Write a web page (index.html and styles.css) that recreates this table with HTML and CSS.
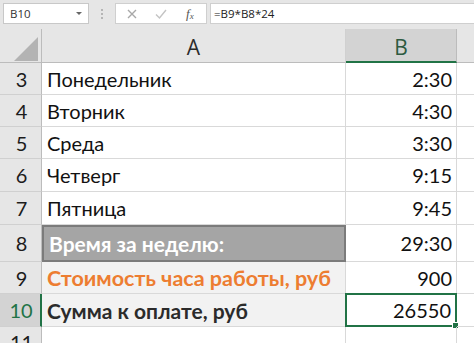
FILE: index.html
```html
<!DOCTYPE html>
<html lang="ru">
<head>
<meta charset="utf-8">
<link rel="stylesheet" href="styles.css">
</head>
<body>
<div class="toolbar">
  <div class="namebox"><span class="name">B10</span><span class="caret"></span></div>
  <div class="grip"><i></i><i></i><i></i></div>
  <div class="btns">
    <svg class="ic" width="14" height="14" viewBox="0 0 14 14"><path d="M3 3 L11 11 M11 3 L3 11" stroke="#a8a8a8" stroke-width="1.4" fill="none"/></svg>
    <svg class="ic" width="14" height="14" viewBox="0 0 14 14"><path d="M2 7.5 L5.5 11 L12 3" stroke="#c4c4c4" stroke-width="1.4" fill="none"/></svg>
    <span class="fx">f<sub>x</sub></span>
  </div>
  <div class="formula">=B9*B8*24</div>
</div>
<div class="sheet">
  <div class="corner"><svg width="41" height="34" viewBox="0 0 41 34"><polygon points="38,8 38,32 14,32" fill="#b3b3b3"/></svg></div>
  <div class="colh">A</div>
  <div class="colh sel">B</div>
  <div class="colh last"></div>

  <div class="rowh r3">3</div><div class="c a">Понедельник</div><div class="c b">2:30</div><div class="c e"></div>
  <div class="rowh">4</div><div class="c a">Вторник</div><div class="c b">4:30</div><div class="c e"></div>
  <div class="rowh">5</div><div class="c a">Среда</div><div class="c b">3:30</div><div class="c e"></div>
  <div class="rowh">6</div><div class="c a">Четверг</div><div class="c b">9:15</div><div class="c e"></div>
  <div class="rowh">7</div><div class="c a">Пятница</div><div class="c b">9:45</div><div class="c e"></div>
  <div class="rowh">8</div><div class="c a total">Время за неделю:</div><div class="c b">29:30</div><div class="c e"></div>
  <div class="rowh">9</div><div class="c a rate">Стоимость часа работы, руб</div><div class="c b">900</div><div class="c e"></div>
  <div class="rowh selrow">10</div><div class="c a sum">Сумма к оплате, руб</div><div class="c b active">26550<span class="handle"></span></div><div class="c e"></div>
  <div class="rowh">11</div><div class="c a"></div><div class="c b"></div><div class="c e"></div>
</div>
</body>
</html>
```
FILE: styles.css
```css
html, body {
  margin: 0;
  padding: 0;
  background: #ffffff;
  width: 474px;
  height: 343px;
  overflow: hidden;
}
body {
  font-family: "Lato", "Liberation Sans", sans-serif;
  color: #111;
}
.toolbar {
  height: 29px;
  background: #e6e6e6;
  display: flex;
  align-items: flex-start;
  padding: 3px 0 0 3px;
  box-sizing: border-box;
}
.namebox {
  width: 86px;
  height: 21px;
  box-sizing: border-box;
  background: #fff;
  border: 1px solid #c8c8c8;
  display: flex;
  align-items: center;
  justify-content: space-between;
  padding: 0 6px 0 6px;
  font-family: "Open Sans", "Liberation Sans", sans-serif;
  font-size: 11.5px;
  color: #333;
}
.caret {
  width: 0;
  height: 0;
  border-left: 3px solid transparent;
  border-right: 3px solid transparent;
  border-top: 3px solid #666;
}
.grip {
  width: 26px;
  height: 21px;
  display: flex;
  flex-direction: column;
  align-items: center;
  justify-content: center;
  gap: 2px;
}
.grip i {
  display: block;
  width: 2px;
  height: 2px;
  background: #b5b5b5;
}
.btns {
  width: 92px;
  height: 21px;
  box-sizing: border-box;
  background: #fff;
  border: 1px solid #cfcfcf;
  display: flex;
  align-items: center;
  padding-left: 9px;
}
.btns .ic:first-child { margin-right: 15px; }
.btns .ic { display: block; }
.fx {
  font-family: "Liberation Serif", serif;
  font-style: italic;
  font-size: 13px;
  color: #555;
  margin-left: 18px;
  line-height: 1;
}
.fx sub { font-size: 9px; vertical-align: -1px; }
.formula {
  flex: 1;
  margin-left: 3px;
  height: 21px;
  box-sizing: border-box;
  background: #fff;
  border: 1px solid #cfcfcf;
  border-right: none;
  padding-left: 3px;
  font-family: "Open Sans", "Liberation Sans", sans-serif;
  font-size: 11.5px;
  line-height: 19px;
  color: #222;
}
.sheet {
  display: grid;
  grid-template-columns: 42px 304px 111px 1fr;
  grid-template-rows: 34px 32px 32px 32px 33px 33px 37px 32px 33px 30px;
}
.corner {
  background: #e6e6e6;
  border-right: 1px solid #bcbcbc;
  border-bottom: 1px solid #bcbcbc;
  box-sizing: border-box;
}
.corner svg { display: block; }
.colh {
  background: #e6e6e6;
  border-right: 1px solid #d0d0d0;
  border-bottom: 1px solid #bcbcbc;
  box-sizing: border-box;
  display: flex;
  align-items: center;
  justify-content: center;
  font-family: "Open Sans", "Liberation Sans", sans-serif;
  font-size: 21px;
  color: #2b2b2b;
  padding-top: 3px;
}
.colh.sel {
  background: #d3d3d3;
  color: #2d5a40;
  border-bottom: 2px solid #217346;
  border-right-color: #bcbcbc;
}
.colh.last { border-right: none; }
.rowh {
  background: #e6e6e6;
  border-right: 1px solid #bcbcbc;
  border-bottom: 1px solid #d0d0d0;
  box-sizing: border-box;
  display: flex;
  align-items: center;
  justify-content: center;
  font-family: "Lato", "Liberation Sans", sans-serif;
  font-size: 20px;
  color: #1c1c1c;
  padding-left: 2px;
}
.rowh.selrow {
  background: #d3d3d3;
  color: #217346;
  border-right: 2px solid #217346;
}
.c {
  border-right: 1px solid #d9d9d9;
  border-bottom: 1px solid #d9d9d9;
  box-sizing: border-box;
  display: flex;
  align-items: center;
  font-size: 20px;
  white-space: nowrap;
  overflow: hidden;
  position: relative;
}
.c.a { padding-left: 5px; }
.c.b { justify-content: flex-end; padding-right: 4px; overflow: visible; }
.c.e { border-right: none; }
.total {
  background: #a5a5a5;
  border: 2px solid #7b7b7b;
  color: #fff;
  font-weight: 700;
  font-size: 21px;
}
.rate {
  background: #f2f2f2;
  color: #ed7d31;
  font-weight: 700;
  font-size: 21.5px;
}
.sum {
  background: #f2f2f2;
  color: #2b2b2b;
  font-weight: 700;
  font-size: 21px;
}
.active {
  border: 2px solid #217346;
  margin: -1px 0 0 -1px;
}
.handle {
  position: absolute;
  right: -4px;
  bottom: -4px;
  width: 5px;
  height: 5px;
  background: #217346;
  border: 1px solid #fff;
}
```
